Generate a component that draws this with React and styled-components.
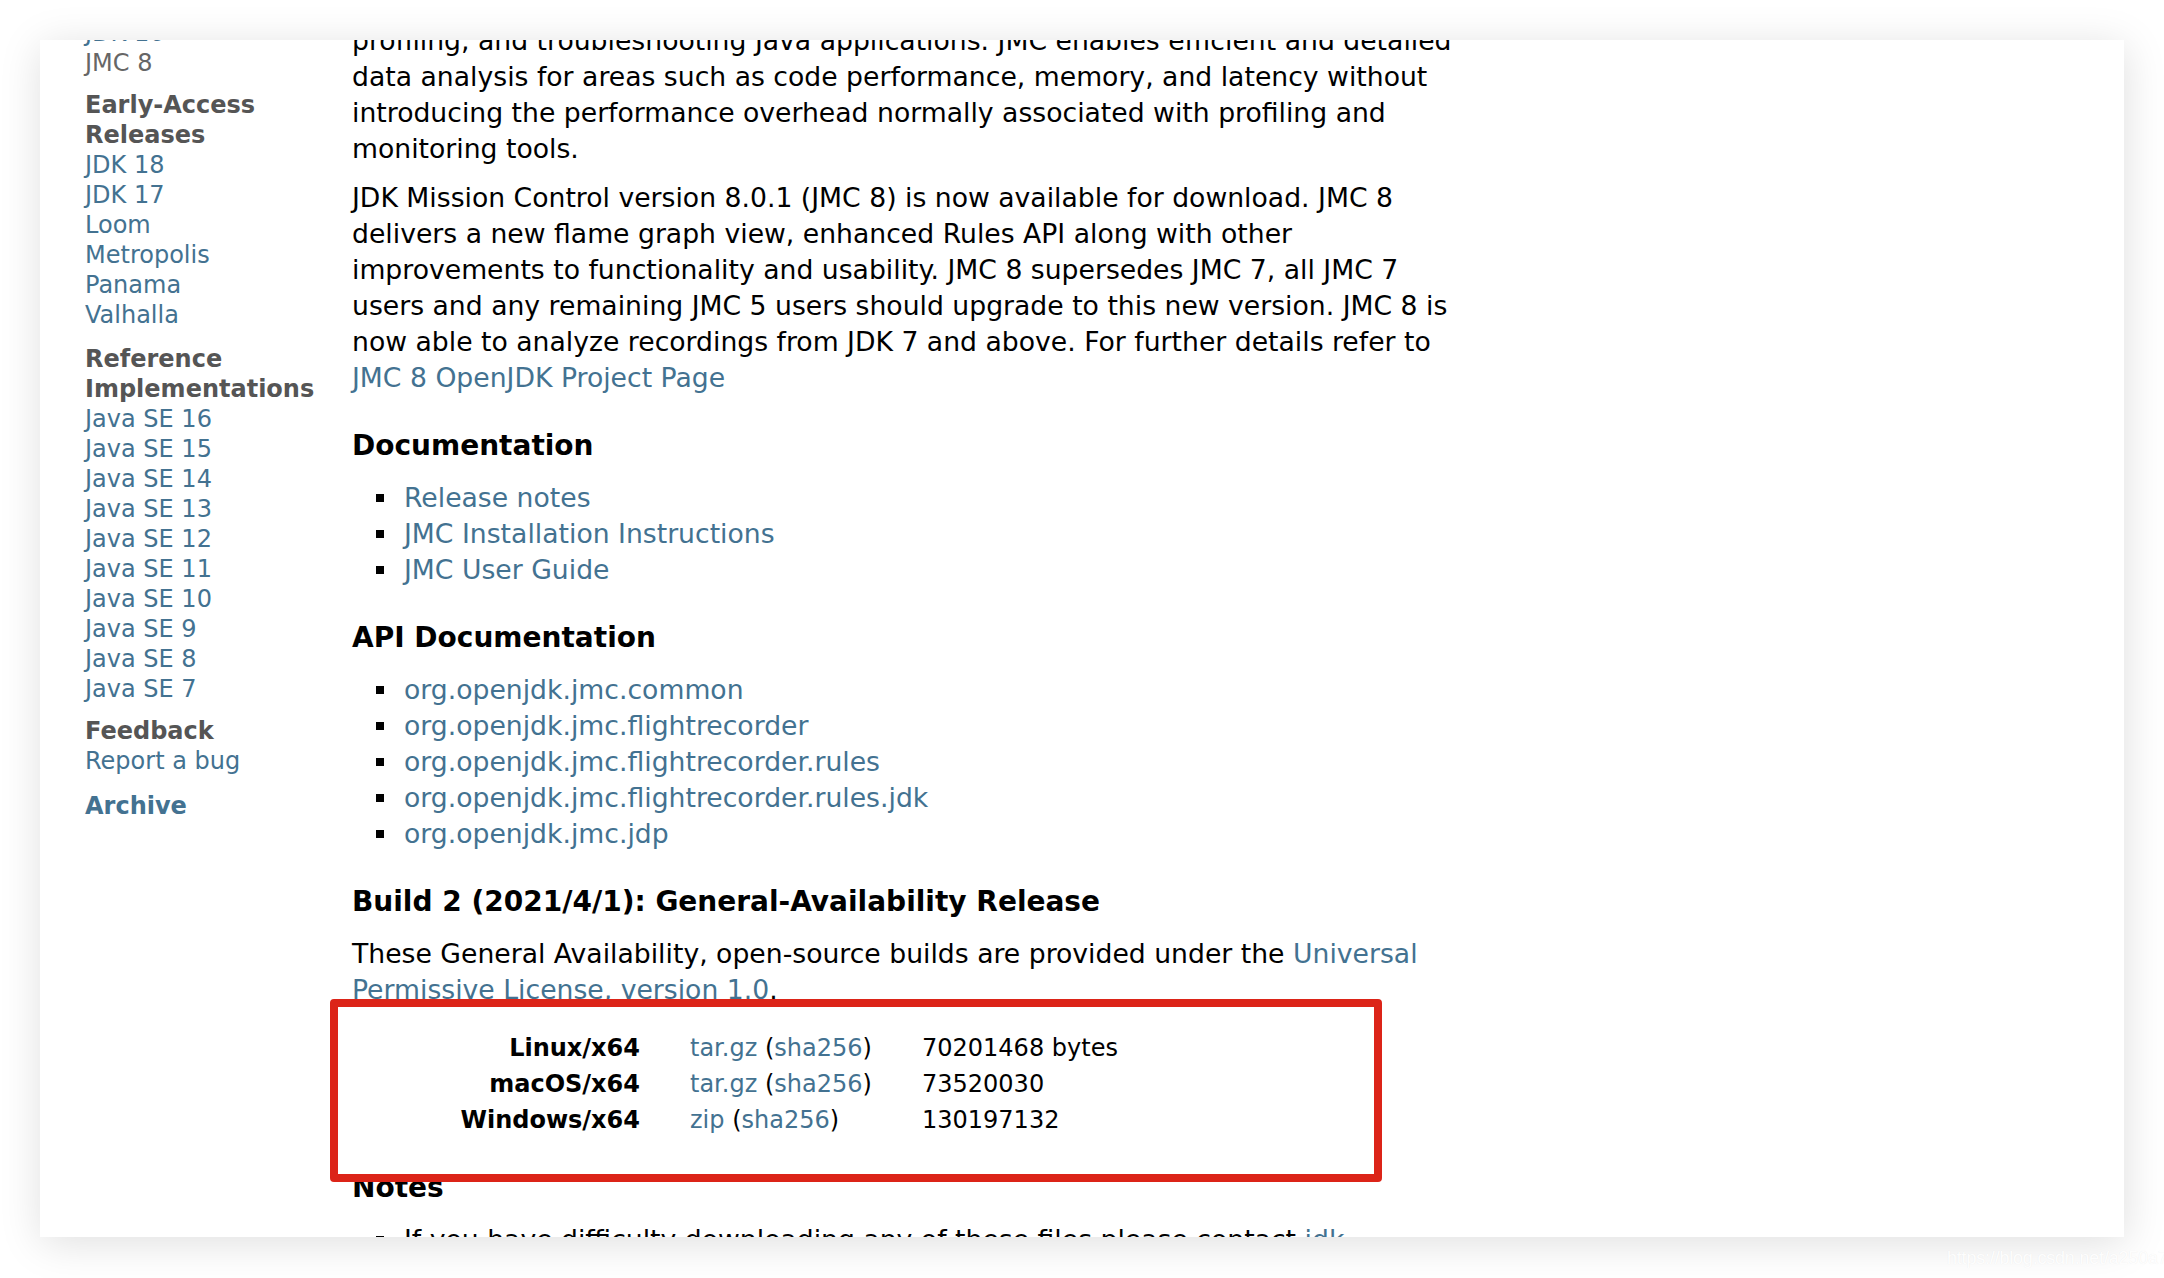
import React from "react";
import styled, { createGlobalStyle } from "styled-components";

const GlobalStyle = createGlobalStyle`
	html, body {
		margin: 0;
		padding: 0;
		background: #ffffff;
	}
	body {
		font-family: "DejaVu Sans", "Liberation Sans", sans-serif;
		color: #000;
	}
`;

const Page = styled.div`
	position: relative;
	width: 2164px;
	height: 1278px;
	overflow: hidden;
	padding: 40px;
	box-sizing: border-box;
`;

const Frame = styled.div`
	width: 2084px;
	height: 1197px;
	background: #fff;
	overflow: hidden;
	display: flex;
	align-items: flex-start;
	box-shadow: 1px 6px 40px rgba(0, 0, 0, 0.13);
`;

const Sidebar = styled.nav`
	width: 250px;
	flex: none;
	margin-top: -22px;
	padding-left: 45px;
	font-size: 24px;
	line-height: 30px;
`;

const NavGroup = styled.div`
	margin-top: ${(p) => p.$gap || 12}px;
	&:first-child {
		margin-top: 0;
	}
`;

const NavTitle = styled.div`
	font-weight: bold;
	color: #555;
`;

const NavLink = styled.a`
	display: block;
	color: ${(p) => (p.$current ? "#666" : "#437291")};
	font-weight: ${(p) => (p.$bold ? "bold" : "normal")};
	text-decoration: none;
`;

const Main = styled.main`
	width: 1120px;
	flex: none;
	margin-left: 17px;
	margin-top: -17px;
	font-size: 26.67px;
	line-height: 36px;

	a {
		color: #437291;
		text-decoration: none;
	}
`;

const Para = styled.p`
	margin: 13px 0;
	&:first-child {
		margin-top: 0;
	}
`;

const Heading = styled.h2`
	font-size: 28px;
	line-height: 36px;
	font-weight: bold;
	margin: 32px 0 16px;
`;

const List = styled.ul`
	margin: 16px 0;
	padding-left: 52px;
	list-style: none;
`;

const Item = styled.li`
	&::before {
		content: "";
		display: inline-block;
		width: 8px;
		height: 8px;
		background: #000;
		margin-left: -28px;
		margin-right: 20px;
		vertical-align: 0.2em;
	}
`;

const Downloads = styled.div`
	position: relative;
	margin: 22px 0 31px;
	display: grid;
	grid-template-columns: 288px 182px auto;
	column-gap: 50px;
	font-size: 24px;
	white-space: nowrap;
`;

const Platform = styled.div`
	font-weight: bold;
	text-align: right;
`;

const Highlight = styled.div`
	position: absolute;
	top: -31px;
	left: -22px;
	width: 1052px;
	height: 183px;
	box-sizing: border-box;
	border: 8px solid #dc2418;
	border-radius: 4px;
	pointer-events: none;
`;

const Watermark = styled.div`
	position: absolute;
	left: 1947px;
	top: 1248px;
	font-family: "Liberation Sans", Arial, sans-serif;
	font-size: 18px;
	line-height: 21px;
	letter-spacing: -0.2px;
	color: rgba(255, 255, 255, 0.95);
	text-shadow: 0 0 1px rgba(0, 0, 0, 0.07);
	white-space: nowrap;
`;

const javaSE = [16, 15, 14, 13, 12, 11, 10, 9, 8, 7];

const builds = [
	{ os: "Linux/x64", kind: "tar.gz", size: "70201468 bytes" },
	{ os: "macOS/x64", kind: "tar.gz", size: "73520030" },
	{ os: "Windows/x64", kind: "zip", size: "130197132" },
];

const apiDocs = [
	"org.openjdk.jmc.common",
	"org.openjdk.jmc.flightrecorder",
	"org.openjdk.jmc.flightrecorder.rules",
	"org.openjdk.jmc.flightrecorder.rules.jdk",
	"org.openjdk.jmc.jdp",
];

export default function App() {
	return (
		<>
			<GlobalStyle />
			<Page>
				<Frame>
					<Sidebar>
						<NavGroup>
							<NavLink href="#">JDK 16</NavLink>
							<NavLink $current>JMC 8</NavLink>
						</NavGroup>
						<NavGroup>
							<NavTitle>Early-Access Releases</NavTitle>
							<NavLink href="#">JDK 18</NavLink>
							<NavLink href="#">JDK 17</NavLink>
							<NavLink href="#">Loom</NavLink>
							<NavLink href="#">Metropolis</NavLink>
							<NavLink href="#">Panama</NavLink>
							<NavLink href="#">Valhalla</NavLink>
						</NavGroup>
						<NavGroup $gap={14}>
							<NavTitle>Reference Implementations</NavTitle>
							{javaSE.map((v) => (
								<NavLink key={v} href="#">
									Java SE {v}
								</NavLink>
							))}
						</NavGroup>
						<NavGroup $gap={12}>
							<NavTitle>Feedback</NavTitle>
							<NavLink href="#">Report a bug</NavLink>
						</NavGroup>
						<NavGroup $gap={15}>
							<NavLink href="#" $bold>
								Archive
							</NavLink>
						</NavGroup>
					</Sidebar>

					<Main>
						<Para>
							profiling, and troubleshooting Java applications. JMC enables efficient and detailed
							data analysis for areas such as code performance, memory, and latency without
							introducing the performance overhead normally associated with profiling and
							monitoring tools.
						</Para>
						<Para>
							JDK Mission Control version 8.0.1 (JMC 8) is now available for download. JMC 8
							delivers a new flame graph view, enhanced Rules API along with other improvements to
							functionality and usability. JMC 8 supersedes JMC 7, all JMC 7 users and any
							remaining JMC 5 users should upgrade to this new version. JMC 8 is now able to
							analyze recordings from JDK 7 and above. For further details refer to{" "}
							<a href="#">JMC 8 OpenJDK Project Page</a>
						</Para>

						<Heading>Documentation</Heading>
						<List>
							<Item>
								<a href="#">Release notes</a>
							</Item>
							<Item>
								<a href="#">JMC Installation Instructions</a>
							</Item>
							<Item>
								<a href="#">JMC User Guide</a>
							</Item>
						</List>

						<Heading>API Documentation</Heading>
						<List>
							{apiDocs.map((d) => (
								<Item key={d}>
									<a href="#">{d}</a>
								</Item>
							))}
						</List>

						<Heading>Build 2 (2021/4/1): General-Availability Release</Heading>
						<Para>
							These General Availability, open-source builds are provided under the{" "}
							<a href="#">Universal Permissive License, version 1.0</a>.
						</Para>

						<Downloads>
							{builds.map((b) => (
								<React.Fragment key={b.os}>
									<Platform>{b.os}</Platform>
									<div>
										<a href="#">{b.kind}</a> (<a href="#">sha256</a>)
									</div>
									<div>{b.size}</div>
								</React.Fragment>
							))}
							<Highlight />
						</Downloads>

						<Heading>Notes</Heading>
						<List>
							<Item>
								If you have difficulty downloading any of these files please contact{" "}
								<a href="#">jdk-download-help_ww@oracle.com</a>.
							</Item>
						</List>
					</Main>
				</Frame>
				<Watermark>https://blog.csdn.net/a250a7</Watermark>
			</Page>
		</>
	);
}
